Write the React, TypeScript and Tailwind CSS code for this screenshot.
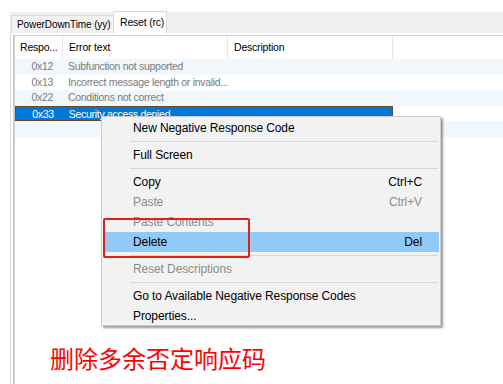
import React from 'react';

type Row = { code: string; text: string };

const rows: Row[] = [
  { code: '0x12', text: 'Subfunction not supported' },
  { code: '0x13', text: 'Incorrect message length or invalid...' },
  { code: '0x22', text: 'Conditions not correct' },
  { code: '0x33', text: 'Security access denied' },
];

type MenuItem =
  | { sep: true }
  | { label: string; key?: string; disabled?: boolean; active?: boolean; sep?: false };

const menu: MenuItem[] = [
  { label: 'New Negative Response Code' },
  { sep: true },
  { label: 'Full Screen' },
  { sep: true },
  { label: 'Copy', key: 'Ctrl+C' },
  { label: 'Paste', key: 'Ctrl+V', disabled: true },
  { label: 'Paste Contents', disabled: true },
  { label: 'Delete', key: 'Del', active: true },
  { sep: true },
  { label: 'Reset Descriptions', disabled: true },
  { sep: true },
  { label: 'Go to Available Negative Response Codes' },
  { label: 'Properties...' },
];

const ContextMenu: React.FC = () => (
  <div className="absolute left-[101px] top-[116px] w-[340px] h-[210px] bg-[#f2f2f2] border border-[#cccccc] shadow-[2px_2px_2px_rgba(0,0,0,0.4)] p-[1px] text-[12px] text-[#000] tracking-[-0.1px] font-['Liberation_Sans',sans-serif]">
    {menu.map((m, i) =>
      m.sep ? (
        <div key={i} className="h-[7px] flex items-center pl-[27px] pr-[1px]">
          <div className="h-px w-full bg-[#d7d7d7]" />
        </div>
      ) : (
        <div
          key={i}
          className={`h-[20px] flex items-center justify-between pl-[30px] pr-[17px] ${
            m.active ? 'bg-[#91c9f7]' : ''
          } ${m.disabled ? 'text-[#8c8c8c]' : 'text-[#000]'}`}
        >
          <span>{m.label}</span>
          {m.key && <span>{m.key}</span>}
        </div>
      )
    )}
  </div>
);

export default function App() {
  return (
    <div className="relative w-[503px] h-[384px] overflow-hidden bg-white font-['Liberation_Sans',sans-serif]">
      <div className="flex flex-col h-full pl-[10px] pt-[11px]">
        {/* tab strip */}
        <div className="relative h-[22px] flex items-end">
          <div className="absolute left-0 right-0 top-[1px] bottom-0 bg-[#f0f0f0]" />
          <div className="relative h-[18px] w-[102px] ml-px border-l border-t border-[#d9d9d9] bg-[#f0f0f0] text-[10px] leading-[17px] text-[#000] pl-[5px] tracking-[-0.1px] whitespace-nowrap overflow-hidden">
            PowerDownTime (yy)
          </div>
          <div className="relative h-[22px] w-[54px] border-l border-t border-r border-[#d9d9d9] bg-white text-[10.5px] leading-[20px] text-[#000] pl-[6px] tracking-[-0.2px] whitespace-nowrap">
            Reset (rc)
          </div>
        </div>

        {/* panel */}
        <div className="flex-1 flex flex-col border-l border-t border-[#d9d9d9] pl-[2px] pt-[2px] -mt-px">
          <div className="flex-1 flex flex-col border-l-2 border-t border-[#c9cdd2]">
            {/* header */}
            <div className="h-[23px] flex text-[10.5px] text-[#000] tracking-[-0.2px] whitespace-nowrap">
              <div className="w-[48px] flex items-center pl-[5px] border-r border-[#e5e5e5]">Respo...</div>
              <div className="w-[165px] flex items-center pl-[6px] border-r border-[#e5e5e5]">Error text</div>
              <div className="w-[165px] flex items-center pl-[6px] border-r border-[#e5e5e5]">Description</div>
              <div className="flex-1" />
            </div>
            {/* rows */}
            {rows.map((r, i) => {
              const selected = r.code === '0x33';
              return (
                <div
                  key={r.code}
                  className={`h-[15.5px] flex text-[10.5px] leading-[15px] tracking-[-0.3px] ${
                    i % 2 === 0 ? 'bg-[#f1f8fd]' : 'bg-white'
                  }`}
                >
                  <div
                    className={`w-[378px] flex ${
                      selected
                        ? 'bg-[#0078d7] text-white border border-dotted border-[#5a3a1a]'
                        : 'text-[#7a7a7a]'
                    }`}
                  >
                    <div className="w-[48px] text-right pr-[10px]">{r.code}</div>
                    <div className="w-[165px] pl-[5px] whitespace-nowrap">{r.text}</div>
                    <div className="w-[165px]" />
                  </div>
                  <div className={`flex-1 ${selected ? 'bg-white' : ''}`} />
                </div>
              );
            })}
            <div className="h-[15.5px] bg-[#f1f8fd]" />
            <div className="flex-1" />
          </div>
        </div>
      </div>

      <ContextMenu />

      {/* annotation box */}
      <div className="absolute left-[103px] top-[218px] w-[147px] h-[40px] border-2 border-[#e0201e] rounded-[2px]" />

      {/* annotation text */}
      <div className="absolute left-[50px] top-[342px] text-[24px] leading-[32px] text-[#ff0000] font-['Noto_Sans_CJK_SC',sans-serif]">
        删除多余否定响应码
      </div>
    </div>
  );
}
